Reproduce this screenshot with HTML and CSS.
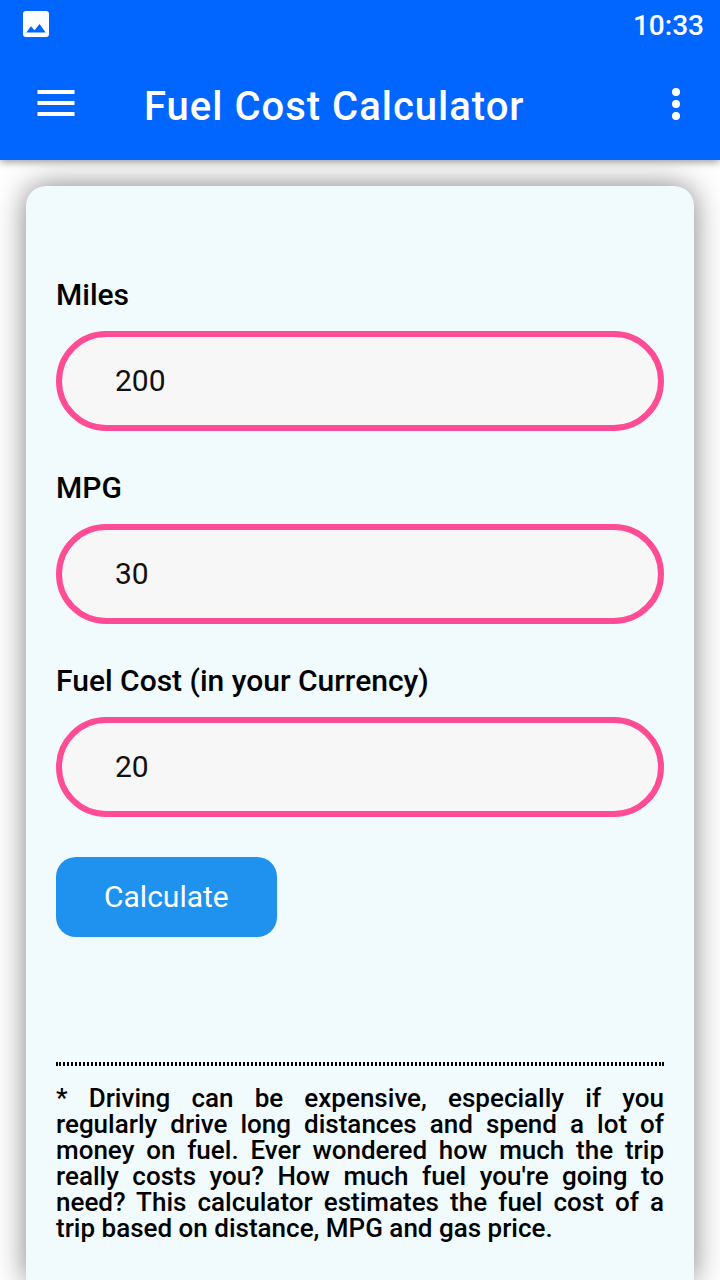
FILE: index.html
```html
<!DOCTYPE html>
<html lang="en">
<head>
<meta charset="utf-8">
<meta name="viewport" content="width=device-width, initial-scale=1">
<title>Fuel Cost Calculator</title>
<link rel="stylesheet" href="styles.css">
</head>
<body>
<header class="app-header">
  <div class="status-bar">
    <svg class="status-icon" viewBox="0 0 26 26" aria-hidden="true"><path fill="#fff" fill-rule="evenodd" d="M3 0h20a3 3 0 0 1 3 3v20a3 3 0 0 1-3 3H3a3 3 0 0 1-3-3V3a3 3 0 0 1 3-3zM3.300 21.500h19.400L16.500 13l-5 6.300L8 15.200z"/></svg>
    <time class="clock">10:33</time>
  </div>
  <div class="toolbar">
    <button class="icon-button" type="button" aria-label="Menu">
      <svg class="menu-icon" viewBox="0 0 38 28" aria-hidden="true"><path fill="#fff" d="M.5 0h37v4H.5zM.5 11h37v4H.5zM.5 22h37v4H.5z"/></svg>
    </button>
    <h1 class="title">Fuel Cost Calculator</h1>
    <button class="icon-button" type="button" aria-label="More options">
      <svg class="more-icon" viewBox="0 0 8 32" aria-hidden="true"><g fill="#fff"><circle cx="4" cy="4" r="4"/><circle cx="4" cy="16" r="4"/><circle cx="4" cy="28" r="4"/></g></svg>
    </button>
  </div>
</header>
<main class="page">
  <section class="card">
    <form class="form">
      <div class="field">
        <label class="label" for="miles">Miles</label>
        <input class="input" id="miles" type="text" inputmode="decimal" value="200">
      </div>
      <div class="field">
        <label class="label" for="mpg">MPG</label>
        <input class="input" id="mpg" type="text" inputmode="decimal" value="30">
      </div>
      <div class="field">
        <label class="label" for="cost">Fuel Cost (in your Currency)</label>
        <input class="input" id="cost" type="text" inputmode="decimal" value="20">
      </div>
      <button class="submit" type="button">Calculate</button>
    </form>
    <hr class="divider">
    <p class="note">* Driving can be expensive, especially if you regularly drive long distances and spend a lot of money on fuel. Ever wondered how much the trip really costs you? How much fuel you're going to need? This calculator estimates the fuel cost of a trip based on distance, MPG and gas price.</p>
  </section>
</main>
</body>
</html>
```
FILE: styles.css
```css
* {
  box-sizing: border-box;
}

body {
  margin: 0;
  background: #fff;
  color: #000;
  font-family: Roboto, sans-serif;
  overflow-x: hidden;
}

.app-header {
  position: relative;
  background: #06f;
  color: #fff;
  box-shadow: 0 2px 8px rgba(0, 0, 0, 0.4);
}

.status-bar {
  display: flex;
  align-items: center;
  justify-content: space-between;
  height: 48px;
  padding: 0 16px 0 23px;
}

.status-icon {
  width: 26px;
  height: 26px;
}

.clock {
  padding-top: 4px;
  font-size: 28px;
  font-weight: 500;
  line-height: 44px;
}

.toolbar {
  display: flex;
  align-items: center;
  height: 112px;
  padding: 0 12px 0 24px;
}

.icon-button {
  display: flex;
  align-items: center;
  justify-content: center;
  width: 64px;
  height: 64px;
  padding: 0;
  border: 0;
  background: none;
}

.menu-icon {
  width: 38px;
  height: 28px;
}

.more-icon {
  width: 8px;
  height: 32px;
}

.title {
  flex: 1;
  margin: 0;
  padding: 4px 0 0 56px;
  font-size: 40px;
  font-weight: 500;
  letter-spacing: 1px;
}

.page {
  padding: 26px 26px 0;
}

.card {
  padding: 92px 30px 40px;
  border-radius: 20px 20px 0 0;
  background: #f1fafc;
  box-shadow: 0 0 30px rgba(0, 0, 0, 0.5);
}

.form {
  display: flex;
  flex-direction: column;
  align-items: flex-start;
  gap: 40px;
}

.field {
  display: flex;
  flex-direction: column;
  gap: 19px;
  width: 100%;
}

.label {
  font-size: 30px;
  font-weight: 500;
  line-height: 34px;
}

.input {
  width: 100%;
  height: 100px;
  padding: 0 53px 2px;
  border: 6px solid #ff4c94;
  border-radius: 50px;
  background: #f7f7f7;
  color: #111;
  font: 30px Roboto, sans-serif;
}

.submit {
  height: 80px;
  padding: 0 48px 2px;
  border: 0;
  border-radius: 20px;
  background: #1e92ee;
  color: #fff;
  font: 30px Roboto, sans-serif;
}

.divider {
  height: 4px;
  margin: 125px 0 19px;
  border: 2px dotted #000;
}

.note {
  margin: 0;
  font-size: 26px;
  font-weight: 500;
  line-height: 26px;
  text-align: justify;
}
```
